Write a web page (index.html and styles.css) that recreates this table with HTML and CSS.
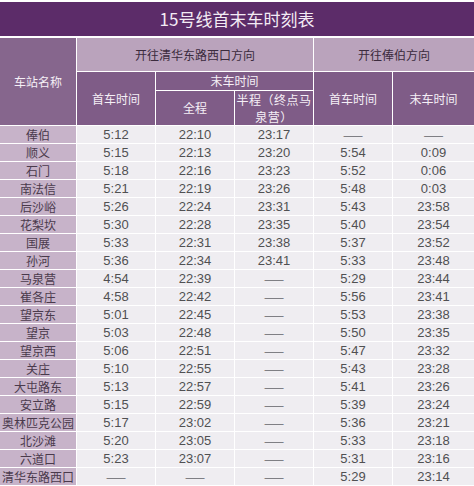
FILE: index.html
```html
<!DOCTYPE html>
<html lang="zh-CN">
<head>
<meta charset="utf-8">
<title>15号线首末车时刻表</title>
<link rel="stylesheet" href="styles.css">
</head>
<body>
<div class="title">15号线首末车时刻表</div>
<div class="grid">
  <div class="h hs station-h">车站名称</div>
  <div class="h hl dir-a">开往清华东路西口方向</div>
  <div class="h hl dir-b">开往俸伯方向</div>
  <div class="h hs first-a">首车时间</div>
  <div class="h hs last-a">末车时间</div>
  <div class="h hs full">全程</div>
  <div class="h hs half"><span>半程（终点马</span><span>泉营）</span></div>
  <div class="h hs first-b">首车时间</div>
  <div class="h hs last-b">末车时间</div>

  <div class="s">俸伯</div><div class="d">5:12</div><div class="d">22:10</div><div class="d">23:17</div><div class="d dash">——</div><div class="d dash">——</div>
  <div class="s">顺义</div><div class="d">5:15</div><div class="d">22:13</div><div class="d">23:20</div><div class="d">5:54</div><div class="d">0:09</div>
  <div class="s">石门</div><div class="d">5:18</div><div class="d">22:16</div><div class="d">23:23</div><div class="d">5:52</div><div class="d">0:06</div>
  <div class="s">南法信</div><div class="d">5:21</div><div class="d">22:19</div><div class="d">23:26</div><div class="d">5:48</div><div class="d">0:03</div>
  <div class="s">后沙峪</div><div class="d">5:26</div><div class="d">22:24</div><div class="d">23:31</div><div class="d">5:43</div><div class="d">23:58</div>
  <div class="s">花梨坎</div><div class="d">5:30</div><div class="d">22:28</div><div class="d">23:35</div><div class="d">5:40</div><div class="d">23:54</div>
  <div class="s">国展</div><div class="d">5:33</div><div class="d">22:31</div><div class="d">23:38</div><div class="d">5:37</div><div class="d">23:52</div>
  <div class="s">孙河</div><div class="d">5:36</div><div class="d">22:34</div><div class="d">23:41</div><div class="d">5:33</div><div class="d">23:48</div>
  <div class="s">马泉营</div><div class="d">4:54</div><div class="d">22:39</div><div class="d dash">——</div><div class="d">5:29</div><div class="d">23:44</div>
  <div class="s">崔各庄</div><div class="d">4:58</div><div class="d">22:42</div><div class="d dash">——</div><div class="d">5:56</div><div class="d">23:41</div>
  <div class="s">望京东</div><div class="d">5:01</div><div class="d">22:45</div><div class="d dash">——</div><div class="d">5:53</div><div class="d">23:38</div>
  <div class="s">望京</div><div class="d">5:03</div><div class="d">22:48</div><div class="d dash">——</div><div class="d">5:50</div><div class="d">23:35</div>
  <div class="s">望京西</div><div class="d">5:06</div><div class="d">22:51</div><div class="d dash">——</div><div class="d">5:47</div><div class="d">23:32</div>
  <div class="s">关庄</div><div class="d">5:10</div><div class="d">22:55</div><div class="d dash">——</div><div class="d">5:43</div><div class="d">23:28</div>
  <div class="s">大屯路东</div><div class="d">5:13</div><div class="d">22:57</div><div class="d dash">——</div><div class="d">5:41</div><div class="d">23:26</div>
  <div class="s">安立路</div><div class="d">5:15</div><div class="d">22:59</div><div class="d dash">——</div><div class="d">5:39</div><div class="d">23:24</div>
  <div class="s">奥林匹克公园</div><div class="d">5:17</div><div class="d">23:02</div><div class="d dash">——</div><div class="d">5:36</div><div class="d">23:21</div>
  <div class="s">北沙滩</div><div class="d">5:20</div><div class="d">23:05</div><div class="d dash">——</div><div class="d">5:33</div><div class="d">23:18</div>
  <div class="s">六道口</div><div class="d">5:23</div><div class="d">23:07</div><div class="d dash">——</div><div class="d">5:31</div><div class="d">23:16</div>
  <div class="s">清华东路西口</div><div class="d dash">——</div><div class="d dash">——</div><div class="d dash">——</div><div class="d">5:29</div><div class="d">23:14</div>
</div>
</body>
</html>
```
FILE: styles.css
```css
html, body {
  margin: 0;
  padding: 0;
  background: #ffffff;
}
body {
  padding-top: 2px;
  width: 474px;
  height: 486px;
  overflow: hidden;
  font-family: "Noto Sans CJK SC", "Noto Sans", sans-serif;
}
.title {
  height: 34px;
  margin-bottom: 2px;
  background: #5c2c69;
  color: #f3ebf4;
  font-size: 17px;
  line-height: 34px;
  text-align: center;
}
.grid {
  display: grid;
  grid-template-columns: 76px 78px 78px 78px 78px 81px;
  grid-template-rows: 33px 18px 34px repeat(20, 17px);
  gap: 1px;
  background: #ffffff;
}
.grid > div {
  display: flex;
  align-items: center;
  justify-content: center;
  text-align: center;
  white-space: nowrap;
  overflow: hidden;
}
.h {
  font-size: 12px;
  line-height: 16px;
}
.hl {
  background: #baa3bc;
  color: #3b2b3d;
}
.hs {
  background: #7f5c87;
  color: #f5eff6;
}
.station-h {
  grid-column: 1;
  grid-row: 1 / 4;
  background: #86668d;
}
.dir-a { grid-column: 2 / 5; grid-row: 1; }
.dir-b { grid-column: 5 / 7; grid-row: 1; }
.first-a { grid-column: 2; grid-row: 2 / 4; }
.last-a { grid-column: 3 / 5; grid-row: 2; }
.full { grid-column: 3; grid-row: 3; }
.half {
  grid-column: 4;
  grid-row: 3;
  flex-direction: column;
  letter-spacing: 0.5px;
}
.half span {
  display: block;
  height: 17px;
  line-height: 17px;
}
.first-b { grid-column: 5; grid-row: 2 / 4; }
.last-b { grid-column: 6; grid-row: 2 / 4; }
.s {
  background: #c7b3c9;
  color: #4a3a4c;
  font-size: 12px;
}
.d {
  background: #efedf1;
  color: #505052;
  font-family: "Liberation Sans", "Noto Sans", sans-serif;
  font-size: 13px;
}
.d.dash {
  font-family: "Noto Sans CJK SC", sans-serif;
  font-size: 12px;
  color: #66666c;
}
```
